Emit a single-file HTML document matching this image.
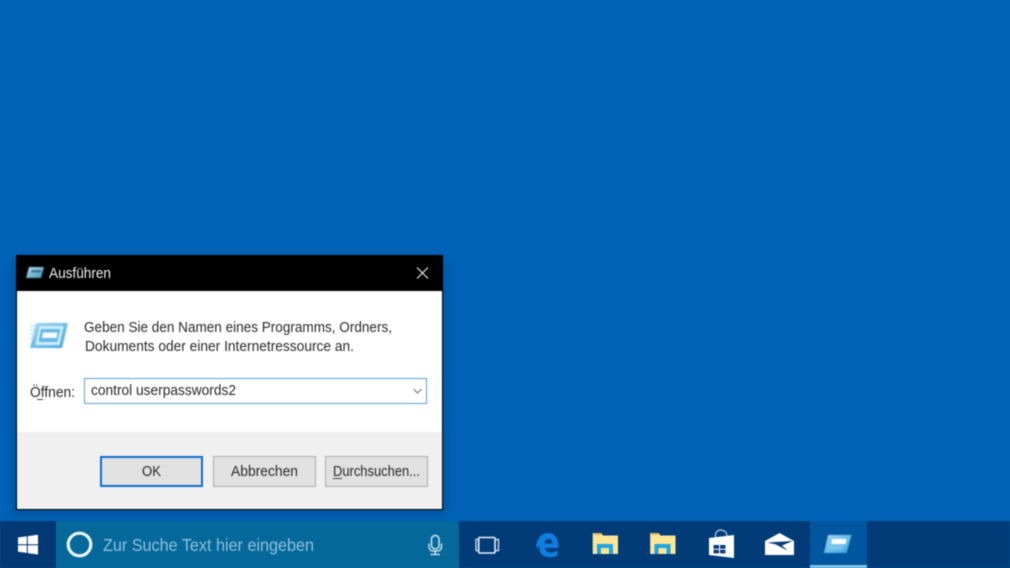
<!DOCTYPE html>
<html lang="de">
<head>
<meta charset="utf-8">
<title>Ausführen</title>
<style>
html,body{margin:0;padding:0;width:1010px;height:568px;overflow:hidden;background:#0063b8}
svg{display:block;filter:blur(.5px)}
text{font-family:"Liberation Sans",sans-serif;font-size:15px;fill:#2a2a2a}
</style>
</head>
<body>
<svg width="1010" height="568" viewBox="0 0 1010 568" xmlns="http://www.w3.org/2000/svg">
<defs>
<linearGradient id="rg" x1="0" y1="0" x2="1" y2="1"><stop offset="0" stop-color="#9fd8f2"/><stop offset="1" stop-color="#3aa5dc"/></linearGradient>
<linearGradient id="tg" x1="0" y1="0" x2="1" y2="1"><stop offset="0" stop-color="#bfe4ee"/><stop offset="1" stop-color="#3d8fb8"/></linearGradient>
<filter id="sh" x="-10%" y="-10%" width="120%" height="120%"><feGaussianBlur stdDeviation="5"/></filter>
<filter id="s1" x="-10%" y="-10%" width="120%" height="120%"><feGaussianBlur stdDeviation=".6"/></filter>
</defs>
<rect x="-5" y="-5" width="1020" height="578" fill="#0063b8"/>

<!-- dialog -->
<rect x="12" y="258" width="435" height="258" fill="#003f7e" opacity=".45" filter="url(#sh)"/>
<rect x="16" y="255" width="427" height="255" fill="#000"/>
<rect x="17" y="291" width="425" height="141" fill="#fff"/>
<rect x="17" y="432" width="425" height="77" fill="#f0f0f0"/>

<!-- title icon -->
<g filter="url(#s1)">
<path d="M29 267H44L41 278H26Z" fill="url(#tg)"/>
<path d="M31.500 270H41.500L40.700 272.500H30.800Z" fill="#2a6f96"/>
</g>
<text x="49" y="278" textLength="62" lengthAdjust="spacingAndGlyphs" style="fill:#f0f0f0">Ausführen</text>
<path d="M417 267.500L428 278.500M428 267.500L417 278.500" stroke="#e8e8e8" stroke-width="1.200" fill="none"/>

<!-- run icon -->
<g filter="url(#s1)">
<path d="M36 323H68L62 348H30Z" fill="url(#rg)"/>
<path d="M39.500 326H63.500L59.500 345H35.500Z" fill="#cfeefa"/>
<path d="M41 329H60.500L57.500 342H38.500Z" fill="#5bb9e6"/>
<path d="M43 332.500H57.500L56.500 338H42Z" fill="#f4fbff"/>
<path d="M30 326H37M30 330H36M30 334H35M30 338H34" stroke="#b5e0f4" stroke-width="1.500"/>
</g>

<text x="84" y="332" textLength="308" lengthAdjust="spacingAndGlyphs">Geben Sie den Namen eines Programms, Ordners,</text>
<text x="85" y="351" textLength="269" lengthAdjust="spacingAndGlyphs">Dokuments oder einer Internetressource an.</text>
<text x="30" y="397" textLength="45" lengthAdjust="spacingAndGlyphs">Öffnen:</text>
<rect x="37" y="399" width="6" height="1" fill="#444"/>

<!-- input -->
<rect x="84.500" y="378.500" width="342" height="25" fill="#fff" stroke="#5a9fdc"/>
<text x="91" y="395" textLength="145" lengthAdjust="spacingAndGlyphs">control userpasswords2</text>
<path d="M413.500 389L417.500 393L421.500 389" stroke="#777" stroke-width="1.100" fill="none"/>

<!-- buttons -->
<rect x="101" y="457" width="101" height="29" fill="#e1e1e1" stroke="#0f6fd0" stroke-width="2"/>
<text x="142" y="476" textLength="19" lengthAdjust="spacingAndGlyphs">OK</text>
<rect x="213.500" y="456.500" width="102" height="30" fill="#e1e1e1" stroke="#adadad"/>
<text x="231" y="476" textLength="67" lengthAdjust="spacingAndGlyphs">Abbrechen</text>
<rect x="325.500" y="456.500" width="102" height="30" fill="#e1e1e1" stroke="#adadad"/>
<text x="333" y="476" textLength="87" lengthAdjust="spacingAndGlyphs">Durchsuchen...</text>
<rect x="333" y="478" width="9" height="1" fill="#444"/>

<!-- taskbar -->
<rect y="521" width="1010" height="52" fill="#013c79"/>
<rect y="521" width="56" height="52" fill="#023873"/>
<rect x="56" y="521" width="403" height="52" fill="#04689b"/>
<rect x="810" y="521" width="57" height="52" fill="#01569f"/>
<rect x="810" y="565" width="57" height="8" fill="#86c4ee"/>

<!-- start -->
<path d="M18 537.500L26.800 536.300V544.300H18ZM27.800 536.100L38 534.700V544.300H27.800ZM18 545.300H26.800V552.900L18 551.700ZM27.800 545.300H38V554.500L27.800 553.100Z" fill="#fff"/>

<!-- cortana -->
<circle cx="79.500" cy="544.500" r="11.300" fill="none" stroke="#e9f5fa" stroke-width="3.200"/>
<text x="103" y="551" textLength="211" lengthAdjust="spacingAndGlyphs" style="font-size:17.500px;fill:#8fc0d6">Zur Suche Text hier eingeben</text>

<!-- mic -->
<rect x="431.500" y="535.500" width="7.500" height="13.500" rx="3.700" fill="none" stroke="#bcd8e6" stroke-width="1.700"/>
<path d="M429 543.500V547A4 4 0 0 0 433 551H437.500A4 4 0 0 0 441.500 547V543.500M435.200 551V554.500M430.500 554.500H440" fill="none" stroke="#bcd8e6" stroke-width="1.600"/>

<!-- task view -->
<rect x="478.700" y="537.500" width="16.300" height="15.500" rx="1" fill="none" stroke="#e8eff6" stroke-width="1.600"/>
<path d="M478.500 539.500H476V550.500H478.500M495 539.500H498.500V550.500H495" fill="none" stroke="#c6d4e4" stroke-width="1.400"/>

<!-- edge -->
<path d="M536.500 546C537 537.500 542 533 548.500 533C555 533 558.500 538.500 558.500 548H545C545.500 552.500 551 554 557.500 550.500V555.500C551 558.500 544 557.500 541 553.500C539.300 551 539 548.500 540 546.300C539 546.800 537.500 547.500 536.500 549ZM544.500 543.500H552.500C552.300 537.500 545.500 537.500 544.500 543.500Z" fill="#0f7ee0" fill-rule="evenodd"/>

<!-- explorer 1 -->
<g id="f1">
<path d="M592.700 533H601L603 535.500H618V554H592.700Z" fill="#fde596"/>
<rect x="592.700" y="533" width="8" height="2" fill="#e0bf5a"/>
<path d="M597 554V544H613V554H609V548H601V554Z" fill="#1fa6e0"/>
</g>
<use href="#f1" x="57.500"/>

<!-- store -->
<path d="M715.500 537.500C715 532.500 717.500 530 720.500 530C724 530 727 532 727 536.500" fill="none" stroke="#b9cfe3" stroke-width="1.200"/>
<path d="M709 538L734 535V558L709 555Z" fill="#fff"/>
<path d="M713.500 545H719V548.700H713.500ZM720 545H725.500V548.700H720ZM713.500 549.700H719V553.400H713.500ZM720 549.700H725.500V553.400H720Z" fill="#0a3d78"/>

<!-- mail -->
<path d="M765 541L779.500 533L794 541V555H765Z" fill="#fff"/>
<path d="M767 542.500L793 541L782 545.500L788 551L776 544.500Z" fill="#0a3d78"/>

<!-- active run -->
<g filter="url(#s1)">
<path d="M828 535H851.500L846.500 553H824Z" fill="url(#rg)"/>
<path d="M832.500 539H846.500L845.500 544H831.500Z" fill="#fff"/>
<path d="M830 546H843.500L842.500 549.500H829Z" fill="#7cc6ea"/>
</g>
</svg>
</body>
</html>
